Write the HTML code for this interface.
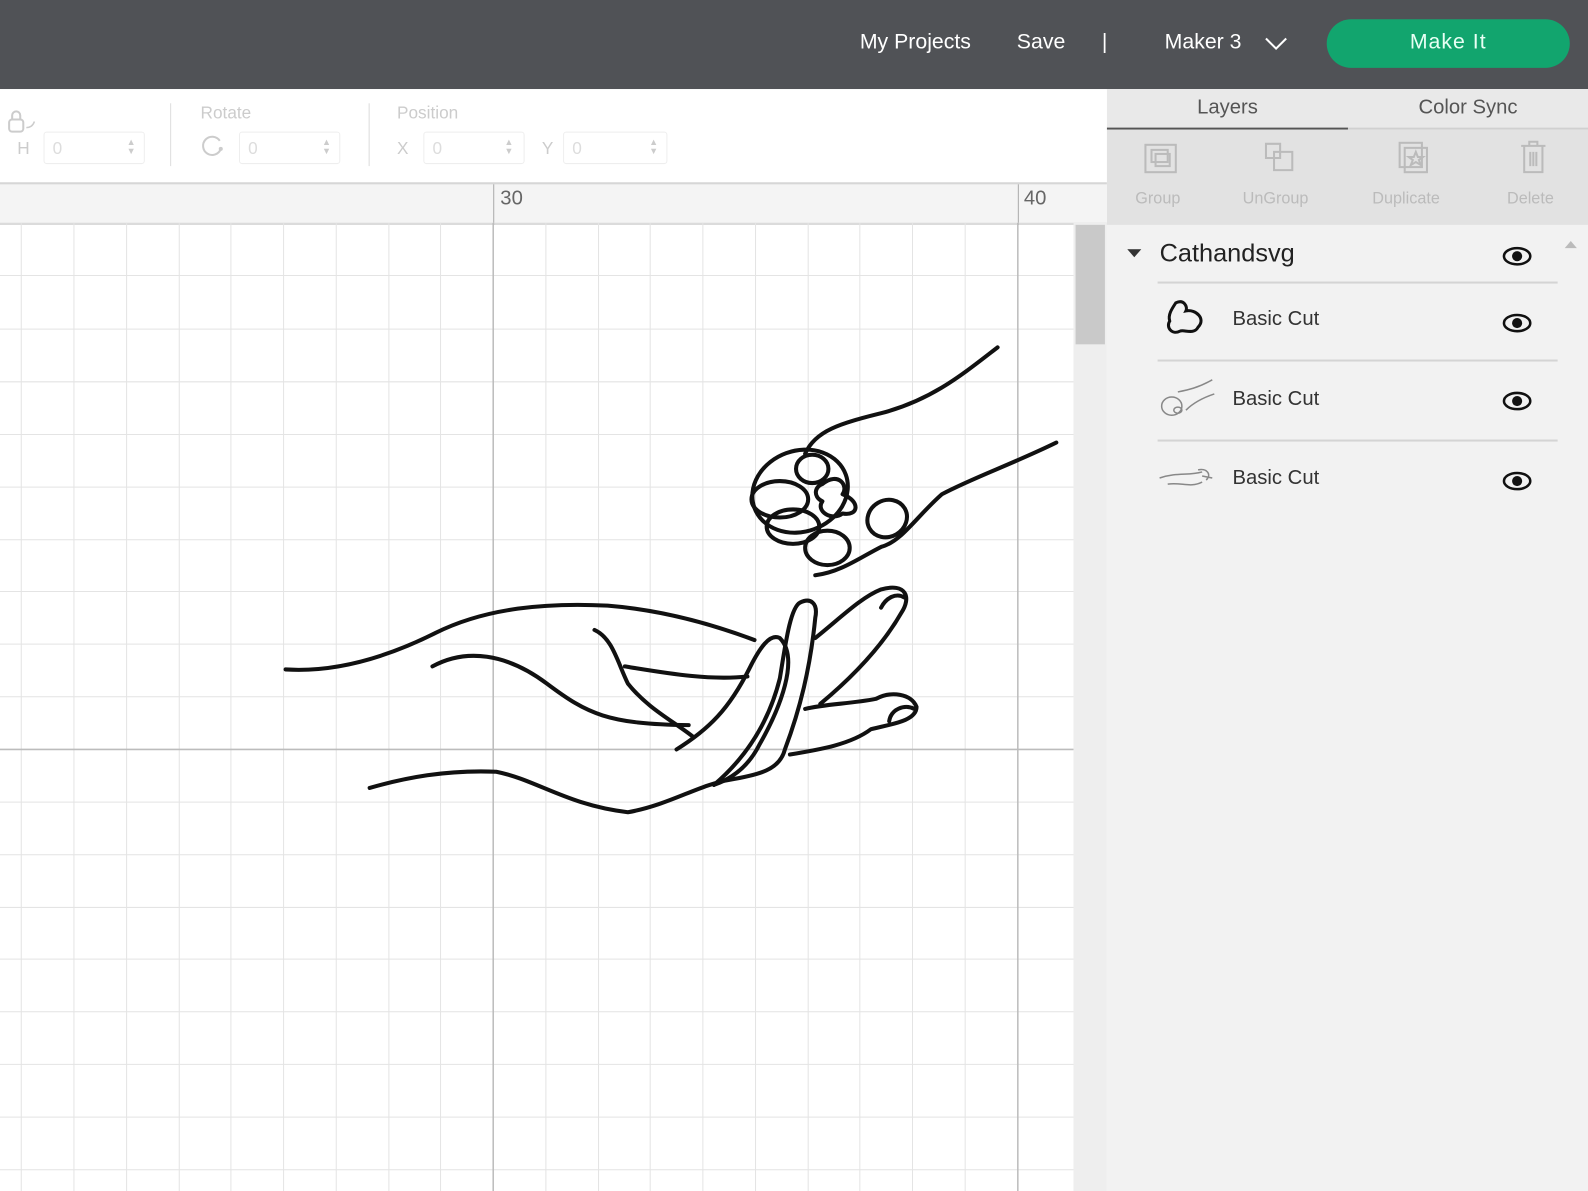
<!DOCTYPE html>
<html><head><meta charset="utf-8"><style>
*{margin:0;padding:0;box-sizing:border-box}
html,body{width:1588px;height:1191px;overflow:hidden;background:#fff;font-family:"Liberation Sans",sans-serif}
#w{position:absolute;left:0;top:0;width:1568px;height:1176px;transform:scale(1.01276);transform-origin:0 0}
.top{position:absolute;left:0;top:0;width:1568px;height:88px;background:#505256;color:#fff;font-size:21px}
.top span{position:absolute;top:30px}
.btn{position:absolute;left:1310px;top:19px;width:240px;height:48px;border-radius:24px;background:#12a56e;color:#e8fff4;font-size:21px;text-align:center;line-height:46px;letter-spacing:1px}
.tb{position:absolute;left:0;top:88px;width:1093px;height:92px;background:#fff;color:#ccc;font-size:17px}
.tb span{position:absolute}
.inp{position:absolute;height:32px;border:1px solid #eee;border-radius:3px;color:#ddd;padding:6px 8px;font-size:17px}
.spin{position:absolute;font-size:9px;line-height:9px;color:#ccc}
.ruler{position:absolute;left:0;top:180px;width:1093px;height:42px;background:#f4f4f4;border-top:2px solid #d6d6d6;border-bottom:2px solid #d6d6d6}
.panel{position:absolute;left:1093px;top:88px;width:475px;height:1088px;background:#f2f2f2}
.tab{position:absolute;top:0;height:40px;font-size:20px;color:#555;text-align:center;line-height:36px;background:#e9e9e9}
.tools{position:absolute;left:0;top:40px;width:475px;height:94px;background:#e2e2e2;color:#bbb;font-size:16px}
.tools span{position:absolute;top:60px}
.row{position:absolute;left:50px;width:395px;border-bottom:2px solid #d4d4d4}
.lbl{position:absolute;font-size:20px;color:#333}
</style></head><body><div id="w">
<div class="top">
<span style="left:849px">My Projects</span><span style="left:1004px">Save</span><span style="left:1088px">|</span><span style="left:1150px">Maker 3</span>
<svg style="position:absolute;left:1248px;top:35px" width="24" height="16"><path d="M2 3 L12 13 L22 3" stroke="#fff" stroke-width="2" fill="none"/></svg>
<div class="btn">Make It</div>
</div>
<div class="tb">
<svg style="position:absolute;left:6px;top:18px" width="34" height="30"><rect x="3" y="12" width="14" height="12" rx="3" fill="none" stroke="#ccc" stroke-width="2"/><path d="M6 12 V8 a4 4 0 0 1 8 0 V12" fill="none" stroke="#ccc" stroke-width="2"/><path d="M20 20 q6 0 8 -6" fill="none" stroke="#ccc" stroke-width="1.5"/></svg>
<span style="left:17px;top:49px">H</span><div class="inp" style="left:43px;top:42px;width:100px">0</div><div class="spin" style="left:125px;top:48px">▲<br>▼</div>
<div style="position:absolute;left:168px;top:14px;width:1px;height:62px;background:#ddd"></div>
<span style="left:198px;top:14px">Rotate</span>
<svg style="position:absolute;left:197px;top:43px" width="26" height="26"><path d="M20 8 A9 9 0 1 0 21 16" fill="none" stroke="#ccc" stroke-width="2"/><circle cx="21" cy="16" r="2" fill="#ccc"/></svg>
<div class="inp" style="left:236px;top:42px;width:100px">0</div><div class="spin" style="left:318px;top:48px">▲<br>▼</div>
<div style="position:absolute;left:364px;top:14px;width:1px;height:62px;background:#ddd"></div>
<span style="left:392px;top:14px">Position</span><span style="left:392px;top:49px">X</span><div class="inp" style="left:418px;top:42px;width:100px">0</div><div class="spin" style="left:498px;top:48px">▲<br>▼</div>
<span style="left:535px;top:49px">Y</span><div class="inp" style="left:556px;top:42px;width:103px">0</div><div class="spin" style="left:641px;top:48px">▲<br>▼</div>
</div>
<div class="ruler"><span style="position:absolute;left:494px;top:3px;font-size:20px;color:#666">30</span><span style="position:absolute;left:1011px;top:3px;font-size:20px;color:#666">40</span>
<div style="position:absolute;left:487px;top:0;width:1px;height:40px;background:#aaa"></div><div style="position:absolute;left:1005px;top:0;width:1px;height:40px;background:#aaa"></div></div>
<svg style="position:absolute;left:0;top:220px" width="1093" height="956">
<g stroke="#e4e4e4" stroke-width="1">
<path d="M21 0V956M73 0V956M125 0V956M177 0V956M228 0V956M280 0V956M332 0V956M384 0V956M435 0V956M539 0V956M591 0V956M642 0V956M694 0V956M746 0V956M798 0V956M849 0V956M901 0V956M953 0V956"/>
<path d="M0 0H1060M0 52H1060M0 105H1060M0 157H1060M0 209H1060M0 261H1060M0 313H1060M0 364H1060M0 416H1060M0 468H1060M0 572H1060M0 624H1060M0 676H1060M0 727H1060M0 779H1060M0 831H1060M0 883H1060M0 935H1060"/>
</g>
<path d="M487 0V956M1005 0V956M0 520H1060" stroke="#bcbcbc" stroke-width="1.5"/>
<rect x="1060" y="0" width="33" height="956" fill="#eee"/><rect x="1062" y="2" width="29" height="118" fill="#c9c9c9"/>
</svg>
<svg style="position:absolute;left:0;top:0" width="1093" height="1176" fill="none" stroke="#111" stroke-width="4" stroke-linecap="round" stroke-linejoin="round">
<path d="M985 343 C950 370 920 395 870 408 C830 418 805 425 795 448"/>
<path d="M1043 437 C1000 458 960 472 930 488 C905 510 890 535 870 540 C850 550 830 565 805 568"/>
<ellipse cx="790" cy="485" rx="48" ry="40" transform="rotate(-20 790 485)"/>
<ellipse cx="770" cy="493" rx="28" ry="18"/><ellipse cx="783" cy="520" rx="26" ry="17"/><ellipse cx="817" cy="541" rx="22" ry="17"/><ellipse cx="802" cy="463" rx="16" ry="14"/>
<path d="M812 478 C828 465 838 480 832 488 C850 495 848 510 832 507 C822 515 805 505 812 495 C802 490 805 480 812 478Z"/>
<ellipse cx="876" cy="512" rx="20" ry="18" transform="rotate(-30 876 512)"/>
<path d="M282 661 C330 664 380 650 430 625 C480 600 540 595 600 598 C650 602 700 615 745 632"/>
<path d="M427 658 C460 640 500 645 540 675 C580 705 600 715 680 716"/>
<path d="M587 622 C605 630 610 655 620 675 C640 700 665 712 685 728"/>
<path d="M617 658 C660 665 700 672 738 668"/>
<path d="M365 778 C400 768 440 760 490 762 C530 770 560 795 620 802 C660 795 690 775 720 770 C750 765 770 760 775 740 C790 700 800 660 805 610 C808 595 800 590 790 595 C780 600 775 640 770 670 C760 710 740 745 705 775"/>
<path d="M668 740 C700 720 720 700 740 660 C750 640 760 625 770 630 C790 650 770 700 750 735 C740 755 725 768 705 775"/>
<path d="M805 630 C830 610 850 590 870 582 C895 575 900 590 890 605 C870 640 840 670 810 695"/>
<path d="M870 600 C875 590 885 585 893 590"/>
<path d="M780 745 C810 740 840 735 860 720 C880 715 905 712 905 698 C900 685 880 682 865 690 C840 695 815 695 795 700"/>
<path d="M878 712 C880 700 893 695 903 700"/>
</svg>
<div class="panel">
<div class="tab" style="left:0;width:238px;border-bottom:2px solid #555">Layers</div>
<div class="tab" style="left:238px;width:237px;border-bottom:2px solid #d0d0d0">Color Sync</div>
<div class="tools">
<svg style="position:absolute;left:35px;top:12px" width="36" height="34" fill="none" stroke="#bbb" stroke-width="2"><rect x="3" y="3" width="30" height="27"/><rect x="9" y="8" width="16" height="12"/><rect x="13" y="12" width="14" height="12"/></svg>
<svg style="position:absolute;left:153px;top:10px" width="34" height="36" fill="none" stroke="#bbb" stroke-width="2"><path d="M4 4H18V18H4Z M12 12H30V30H12Z"/></svg>
<svg style="position:absolute;left:286px;top:10px" width="32" height="36" fill="none" stroke="#bbb" stroke-width="2"><rect x="3" y="3" width="22" height="24"/><rect x="8" y="8" width="22" height="24"/><path d="M19 12l2 5h5l-4 3 2 5-5-3-5 3 2-5-4-3h5z"/></svg>
<svg style="position:absolute;left:407px;top:10px" width="28" height="36" fill="none" stroke="#bbb" stroke-width="2"><path d="M2 6H26M10 6V2H18V6M5 6V32H23V6M11 12V26M14 12V26M17 12V26"/></svg>
<span style="left:28px">Group</span><span style="left:134px">UnGroup</span><span style="left:262px">Duplicate</span><span style="left:395px">Delete</span>
</div>
<svg style="position:absolute;left:20px;top:158px" width="14" height="10"><path d="M0 0H14L7 8Z" fill="#333"/></svg>
<div class="lbl" style="left:52px;top:148px;font-size:25px;color:#222">Cathandsvg</div>
<svg style="position:absolute;left:452px;top:148px" width="14" height="10"><path d="M0 9H12L6 2Z" fill="#bbb"/></svg>
<div class="row" style="top:134px;height:58px"></div>
<div class="row" style="top:192px;height:77px"></div>
<div class="row" style="top:269px;height:79px"></div>
<div class="lbl" style="left:124px;top:216px">Basic Cut</div>
<div class="lbl" style="left:124px;top:295px">Basic Cut</div>
<div class="lbl" style="left:124px;top:373px">Basic Cut</div>
<svg style="position:absolute;left:56px;top:205px" width="44" height="42" fill="none" stroke="#111" stroke-width="3"><path d="M12 6 C20 2 24 10 22 14 C32 12 42 22 34 30 C30 38 20 32 16 34 C8 38 2 30 6 24 C4 18 8 12 12 6Z"/></svg>
<svg style="position:absolute;left:50px;top:285px" width="58" height="44" fill="none" stroke="#888" stroke-width="1.5"><path d="M54 2 C40 10 30 12 20 14 M56 16 C44 20 34 26 28 32"/><ellipse cx="14" cy="28" rx="10" ry="9"/><ellipse cx="20" cy="32" rx="4" ry="3"/></svg>
<svg style="position:absolute;left:50px;top:370px" width="58" height="30" fill="none" stroke="#888" stroke-width="1.5"><path d="M2 14 C20 8 30 12 44 8 M10 20 C24 18 32 24 44 18 M40 6 C48 4 54 10 48 16 M44 12 L54 14"/></svg>
<svg style="position:absolute;left:390px;top:154px" width="30" height="22"><ellipse cx="15" cy="11" rx="13" ry="8" fill="none" stroke="#111" stroke-width="2.5"/><circle cx="15" cy="11" r="5" fill="#111"/></svg>
<svg style="position:absolute;left:390px;top:220px" width="30" height="22"><ellipse cx="15" cy="11" rx="13" ry="8" fill="none" stroke="#111" stroke-width="2.5"/><circle cx="15" cy="11" r="5" fill="#111"/></svg>
<svg style="position:absolute;left:390px;top:297px" width="30" height="22"><ellipse cx="15" cy="11" rx="13" ry="8" fill="none" stroke="#111" stroke-width="2.5"/><circle cx="15" cy="11" r="5" fill="#111"/></svg>
<svg style="position:absolute;left:390px;top:376px" width="30" height="22"><ellipse cx="15" cy="11" rx="13" ry="8" fill="none" stroke="#111" stroke-width="2.5"/><circle cx="15" cy="11" r="5" fill="#111"/></svg>
</div>
</div></body></html>
